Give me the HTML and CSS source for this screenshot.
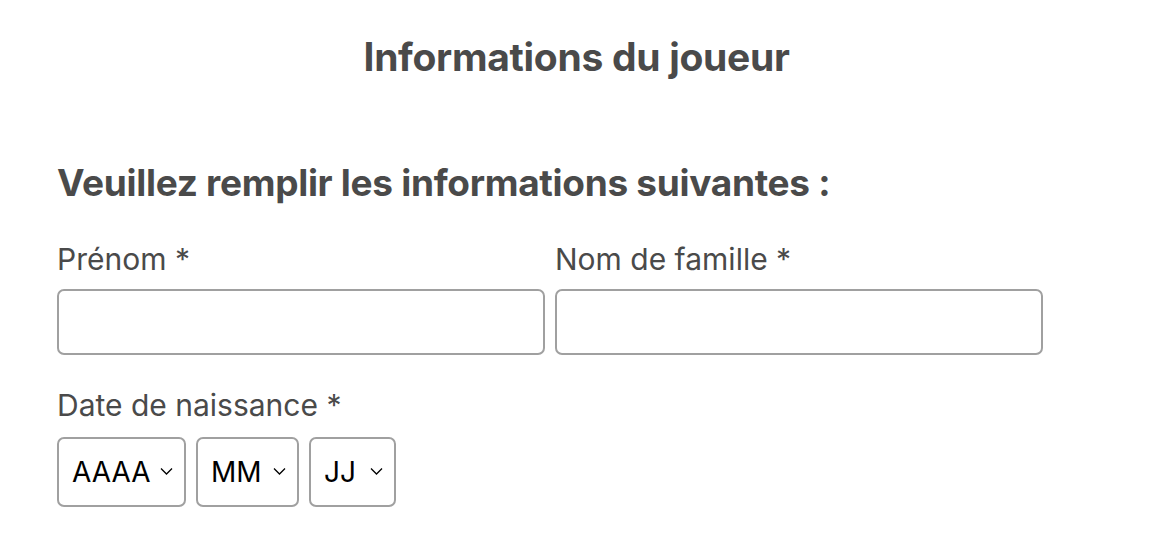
FILE: index.html
```html
<!DOCTYPE html>
<html lang="fr">
<head>
    <meta charset="UTF-8">
    <meta name="viewport" content="width=device-width, initial-scale=1.0">
    <title>Informations du joueur</title>
    <link rel="stylesheet" href="styles.css">
</head>
<body>
    <div class="container">
        <h1>Informations du joueur</h1>
        <h2>Veuillez remplir les informations suivantes :</h2>
        <div class="row">
            <div class="field">
                <label for="prenom">Prénom *</label>
                <input type="text" id="prenom">
            </div>
            <div class="field">
                <label for="nom">Nom de famille *</label>
                <input type="text" id="nom">
            </div>
        </div>
        <div class="field birth">
            <label>Date de naissance *</label>
            <div class="dates">
                <div class="select year"><span>AAAA</span><svg class="chev" width="13" height="8" viewBox="0 0 13 8"><path d="M1 1.5l5.5 5.5 5.5-5.5" fill="none" stroke="#000" stroke-width="1.3"/></svg></div>
                <div class="select month"><span>MM</span><svg class="chev" width="13" height="8" viewBox="0 0 13 8"><path d="M1 1.5l5.5 5.5 5.5-5.5" fill="none" stroke="#000" stroke-width="1.3"/></svg></div>
                <div class="select day"><span>JJ</span><svg class="chev" width="13" height="8" viewBox="0 0 13 8"><path d="M1 1.5l5.5 5.5 5.5-5.5" fill="none" stroke="#000" stroke-width="1.3"/></svg></div>
            </div>
        </div>
    </div>
</body>
</html>
```

FILE: styles.css
```css
body {
    font-family: Inter, "Noto Sans", sans-serif;
    margin: 0;
    padding: 0;
    background-color: #fff;
    color: #4a4a4a;
}
.container {
    width: 1039px;
    padding: 0 0 0 57px;
}
h1 {
    font-size: 39px;
    font-weight: 700;
    text-align: center;
    margin: 0;
    padding-top: 33px;
    letter-spacing: -0.3px;
}
h2 {
    font-size: 37px;
    font-weight: 700;
    margin: 80px 0 0 0;
    letter-spacing: -0.3px;
}
.row {
    display: flex;
    gap: 10px;
    margin-top: 36px;
}
.field {
    display: flex;
    flex-direction: column;
}
label {
    font-size: 30px;
    margin-bottom: 12px;
}
input {
    width: 488px;
    height: 66px;
    box-sizing: border-box;
    border: 2px solid #a0a0a0;
    border-radius: 7px;
    font-size: 28px;
}
.birth {
    margin-top: 32px;
}
.birth label {
    margin-bottom: 14px;
}
.dates {
    display: flex;
    gap: 10px;
}
.select {
    height: 70px;
    box-sizing: border-box;
    border: 2px solid #a0a0a0;
    border-radius: 7px;
    color: #000;
    font-size: 28px;
    display: flex;
    align-items: center;
    justify-content: space-between;
    padding: 0 11px 0 13px;
}
.year { width: 129px; }
.month { width: 103px; }
.day { width: 87px; }
.chev {
    flex: 0 0 13px;
    margin-top: -2px;
}
```
